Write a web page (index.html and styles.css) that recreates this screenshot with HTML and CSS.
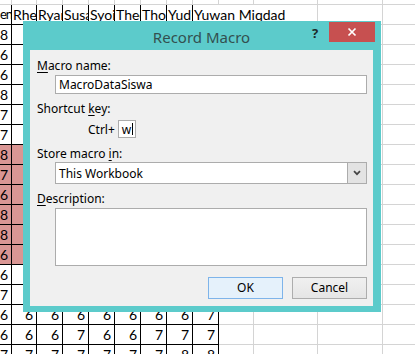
FILE: index.html
```html
<!DOCTYPE html>
<html>
<head>
<meta charset="utf-8">
<link rel="stylesheet" href="styles.css">
</head>
<body>
<div class="sheet">
  <div class="row strip">
    <div class="c"></div><div class="c"></div><div class="c"></div><div class="c"></div><div class="c"></div><div class="c"></div><div class="c"></div><div class="c"></div><div class="c"></div><div class="c"></div><div class="c"></div><div class="c"></div><div class="c"></div>
  </div>
  <div class="row head">
    <div class="d h first">en</div><div class="d h">Rhena</div><div class="d h">Ryan</div><div class="d h">Susanti</div><div class="d h">Syoi</div><div class="d h">Theo</div><div class="d h">Thomas</div><div class="d h">Yudi</div><div class="d h open over">Yuwan Miqdad</div><div class="c open"></div><div class="c"></div><div class="c"></div><div class="c"></div>
  </div>
  <div class="row"><div class="d">8</div><div class="d">7</div><div class="d">8</div><div class="d">7</div><div class="d">8</div><div class="d">7</div><div class="d">8</div><div class="d">8</div><div class="d">7</div><div class="c"></div><div class="c"></div><div class="c"></div><div class="c"></div></div>
  <div class="row"><div class="d">6</div><div class="d">6</div><div class="d">7</div><div class="d">6</div><div class="d">6</div><div class="d">7</div><div class="d">6</div><div class="d">7</div><div class="d">6</div><div class="c"></div><div class="c"></div><div class="c"></div><div class="c"></div></div>
  <div class="row"><div class="d">6</div><div class="d">7</div><div class="d">6</div><div class="d">6</div><div class="d">7</div><div class="d">6</div><div class="d">6</div><div class="d">7</div><div class="d">7</div><div class="c"></div><div class="c"></div><div class="c"></div><div class="c"></div></div>
  <div class="row"><div class="d">8</div><div class="d">8</div><div class="d">7</div><div class="d">8</div><div class="d">8</div><div class="d">7</div><div class="d">8</div><div class="d">8</div><div class="d">8</div><div class="c"></div><div class="c"></div><div class="c"></div><div class="c"></div></div>
  <div class="row"><div class="d">7</div><div class="d">7</div><div class="d">7</div><div class="d">6</div><div class="d">7</div><div class="d">7</div><div class="d">7</div><div class="d">6</div><div class="d">7</div><div class="c"></div><div class="c"></div><div class="c"></div><div class="c"></div></div>
  <div class="row"><div class="d">7</div><div class="d">6</div><div class="d">7</div><div class="d">7</div><div class="d">7</div><div class="d">6</div><div class="d">7</div><div class="d">7</div><div class="d">7</div><div class="c"></div><div class="c"></div><div class="c"></div><div class="c"></div></div>
  <div class="row pink"><div class="d">8</div><div class="d">8</div><div class="d">8</div><div class="d">7</div><div class="d">8</div><div class="d">8</div><div class="d">8</div><div class="d">7</div><div class="d">8</div><div class="c"></div><div class="c"></div><div class="c"></div><div class="c"></div></div>
  <div class="row pink"><div class="d">7</div><div class="d">7</div><div class="d">6</div><div class="d">7</div><div class="d">7</div><div class="d">7</div><div class="d">6</div><div class="d">7</div><div class="d">7</div><div class="c"></div><div class="c"></div><div class="c"></div><div class="c"></div></div>
  <div class="row pink"><div class="d">6</div><div class="d">6</div><div class="d">6</div><div class="d">6</div><div class="d">7</div><div class="d">6</div><div class="d">6</div><div class="d">6</div><div class="d">6</div><div class="c"></div><div class="c"></div><div class="c"></div><div class="c"></div></div>
  <div class="row pink"><div class="d">8</div><div class="d">8</div><div class="d">7</div><div class="d">8</div><div class="d">8</div><div class="d">8</div><div class="d">7</div><div class="d">8</div><div class="d">8</div><div class="c"></div><div class="c"></div><div class="c"></div><div class="c"></div></div>
  <div class="row pink"><div class="d">8</div><div class="d">7</div><div class="d">8</div><div class="d">8</div><div class="d">8</div><div class="d">7</div><div class="d">8</div><div class="d">8</div><div class="d">7</div><div class="c"></div><div class="c"></div><div class="c"></div><div class="c"></div></div>
  <div class="row pink"><div class="d">6</div><div class="d">6</div><div class="d">7</div><div class="d">6</div><div class="d">6</div><div class="d">6</div><div class="d">7</div><div class="d">6</div><div class="d">6</div><div class="c"></div><div class="c"></div><div class="c"></div><div class="c"></div></div>
  <div class="row"><div class="d">6</div><div class="d">7</div><div class="d">6</div><div class="d">6</div><div class="d">7</div><div class="d">6</div><div class="d">6</div><div class="d">7</div><div class="d">6</div><div class="c"></div><div class="c"></div><div class="c"></div><div class="c"></div></div>
  <div class="row"><div class="d">7</div><div class="d">7</div><div class="d">7</div><div class="d">6</div><div class="d">7</div><div class="d">7</div><div class="d">7</div><div class="d">7</div><div class="d">7</div><div class="c"></div><div class="c"></div><div class="c"></div><div class="c"></div></div>
  <div class="row"><div class="d">6</div><div class="d">6</div><div class="d">6</div><div class="d">6</div><div class="d">6</div><div class="d">6</div><div class="d">6</div><div class="d">6</div><div class="d">7</div><div class="c"></div><div class="c"></div><div class="c"></div><div class="c"></div></div>
  <div class="row"><div class="d">6</div><div class="d">6</div><div class="d">6</div><div class="d">7</div><div class="d">6</div><div class="d">6</div><div class="d">7</div><div class="d">7</div><div class="d">7</div><div class="c"></div><div class="c"></div><div class="c"></div><div class="c"></div></div>
  <div class="row"><div class="d">7</div><div class="d">7</div><div class="d">7</div><div class="d">7</div><div class="d">7</div><div class="d">7</div><div class="d">7</div><div class="d">8</div><div class="d">8</div><div class="c"></div><div class="c"></div><div class="c"></div><div class="c"></div></div>
</div>

<div class="dialog">
  <div class="titlebar">
    <div class="title">Record Macro</div>
    <div class="help">?</div>
    <div class="close">
      <svg width="10" height="10" viewBox="0 0 10 10"><path d="M1.5 1.5 L8.5 8.5 M8.5 1.5 L1.5 8.5" stroke="#fff" stroke-width="1.7" fill="none"/></svg>
    </div>
  </div>
  <div class="client">
    <div class="label"><u>M</u>acro name:</div>
    <div class="field">MacroDataSiswa</div>
    <div class="label gap">Shortcut <u>k</u>ey:</div>
    <div class="ctrlrow">
      <span class="ctrl">Ctrl+</span>
      <span class="keybox">w<span class="caret"></span></span>
    </div>
    <div class="label gap2">Store macro <u>i</u>n:</div>
    <div class="select">
      <span class="seltext">This Workbook</span>
      <span class="selbtn"><svg width="8" height="6" viewBox="0 0 8 6"><path d="M1 1.2 L4 4.2 L7 1.2" stroke="#444" stroke-width="1.7" fill="none"/></svg></span>
    </div>
    <div class="label gap3"><u>D</u>escription:</div>
    <div class="area"></div>
    <div class="buttons">
      <div class="btn ok">OK</div>
      <div class="btn">Cancel</div>
    </div>
  </div>
</div>
</body>
</html>
```
FILE: styles.css
```css
html, body {
  margin: 0;
  padding: 0;
  background: #fff;
  overflow: hidden;
  width: 415px;
  height: 354px;
}
.sheet {
  font-family: "Lato", "Liberation Sans", sans-serif;
  font-size: 14px;
  color: #000;
  width: 415px;
  overflow: hidden;
}
.row {
  display: grid;
  grid-template-columns: 12px 25px repeat(7, 26px) 35px 64px 65px 65px;
  height: 20px;
}
.row > div {
  box-sizing: border-box;
  height: 20px;
  line-height: 19px;
  border-right: 1px solid #d4d4d4;
  border-bottom: 1px solid #d4d4d4;
  white-space: nowrap;
  overflow: hidden;
}
.row > .d {
  border-right-color: #000;
  border-bottom-color: #000;
  text-align: right;
  padding-right: 3px;
}
.row.strip, .row.strip > div {
  height: 5px;
}
.row.head > .h {
  text-align: left;
  padding: 0 0 0 1px;
}
.row.head > .h.first {
  padding: 0;
  font-size: 13px;
  letter-spacing: -1.2px;
}
.row.head > .open {
  border-right-color: transparent;
}
.row.head > .over {
  overflow: visible;
}
.row.pink > .d {
  background: #da9694;
}

.dialog {
  position: absolute;
  left: 23px;
  top: 21px;
  width: 358px;
  height: 291px;
  box-sizing: border-box;
  background: #5ccbcb;
  padding: 0 8px 6px 7px;
  display: flex;
  flex-direction: column;
  font-family: "Noto Sans", "Open Sans", sans-serif;
}
.titlebar {
  height: 29px;
  display: flex;
  align-items: flex-start;
  padding-left: 65px;
  margin-right: -2px;
}
.title {
  flex: 1;
  text-align: center;
  font-size: 15px;
  line-height: 20px;
  padding-top: 6px;
  color: #33504f;
}
.help {
  width: 14px;
  margin-right: 7px;
  text-align: center;
  font-weight: bold;
  font-size: 13px;
  line-height: 16px;
  padding-top: 4px;
  color: #1b2a2a;
}
.close {
  width: 46px;
  height: 20px;
  margin-top: 1px;
  background: #c75050;
  display: flex;
  align-items: center;
  justify-content: center;
}
.client {
  flex: 1;
  background: #f0f0f0;
  padding: 8px 6px 0 7px;
  font-size: 12px;
  line-height: 15px;
  color: #000;
}
.label u {
  text-decoration-thickness: 1px;
  text-underline-offset: 2px;
}
.field, .select, .area {
  margin-left: 18px;
  box-sizing: border-box;
  background: #fff;
  border: 1px solid #acacac;
}
.field {
  margin-top: 2px;
  height: 19px;
  padding: 1px 3px;
  line-height: 15px;
}
.gap { margin-top: 7px; }
.ctrlrow {
  margin-top: 4px;
  padding-left: 51px;
  display: flex;
  align-items: center;
  gap: 3px;
  height: 18px;
}
.keybox {
  box-sizing: border-box;
  width: 18px;
  height: 18px;
  background: #fff;
  border: 1px solid #acacac;
  padding-left: 3px;
  line-height: 15px;
  display: flex;
  align-items: center;
}
.caret {
  display: inline-block;
  width: 1px;
  height: 12px;
  background: #000;
  margin-left: 1px;
}
.gap2 { margin-top: 8px; }
.select {
  margin-top: 1px;
  height: 22px;
  display: flex;
}
.seltext {
  flex: 1;
  padding: 3px 3px 0;
}
.selbtn {
  width: 18px;
  border-left: 1px solid #acacac;
  background: #e3e3e3;
  display: flex;
  align-items: center;
  justify-content: center;
}
.gap3 { margin-top: 7px; }
.area {
  margin-top: 2px;
  height: 58px;
}
.buttons {
  margin-top: 11px;
  display: flex;
  justify-content: flex-end;
  gap: 9px;
}
.btn {
  box-sizing: border-box;
  width: 75px;
  height: 22px;
  line-height: 20px;
  text-align: center;
  border: 1px solid #adadad;
  background: linear-gradient(#f0f0f0, #e5e5e5);
}
.btn.ok {
  border-color: #7eb4ea;
  background: #e5f1fb;
}
```
